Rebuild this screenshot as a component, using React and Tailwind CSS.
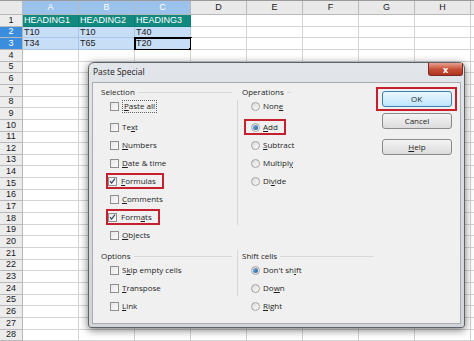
import React from 'react';

const cols = ['A', 'B', 'C', 'D', 'E', 'F', 'G', 'H', ''];

const cells = {
  1: ['HEADING1', 'HEADING2', 'HEADING3'],
  2: ['T10', 'T10', 'T40'],
  3: ['T34', 'T65', 'T20'],
};

const rows = Array.from({ length: 28 }, (_, i) => i + 1);

// alternate 12/11 px so the rows average out near 11.65px
const rowTall = (n) => Math.round(n * 11.65) - Math.round((n - 1) * 11.65) > 11;

const Mn = ({ text, at }) => (
  <span>
    {text.slice(0, at)}
    <span className="underline underline-offset-1">{text[at]}</span>
    {text.slice(at + 1)}
  </span>
);

const CheckBox = ({ checked }) => (
  <span className="flex h-[9px] w-[9px] shrink-0 items-center justify-center border border-[#8e8f8f] bg-gradient-to-br from-[#e6e6e6] to-[#fbfbfb]">
    {checked && (
      <svg width="8" height="8" viewBox="0 0 8 8">
        <path d="M1.2 4.2 L3 6.3 L6.8 1.2" fill="none" stroke="#2a3f5c" strokeWidth="1.3" />
      </svg>
    )}
  </span>
);

const Radio = ({ on }) => (
  <span className="flex h-[9px] w-[9px] shrink-0 items-center justify-center rounded-full border border-[#a3a3a3] bg-gradient-to-br from-[#dcdcdc] to-[#fafafa]">
    {on && <span className="h-[5px] w-[5px] rounded-full bg-gradient-to-br from-[#7fb4e4] to-[#1b5a99]" />}
  </span>
);

const Heading = ({ label, line = 'flex-1' }) => (
  <div className="flex h-[10px] items-center gap-[3px] text-[#1e1e1e]">
    <span className="leading-none">{label}</span>
    <span className={`h-px bg-[#d5d9dd] ${line}`} />
  </div>
);

const Option = ({ children, box, red, pad }) => (
  <div className={`flex h-[18px] items-center ${pad}`}>
    <span
      className={`flex items-center gap-[3px] ${
        red ? 'h-[16px] border-2 border-[#c6202f] pr-[6px]' : 'border-2 border-transparent'
      }`}
    >
      {box}
      {children}
    </span>
  </div>
);

function Sheet() {
  return (
    <div className="font-['Liberation_Sans',Arial,sans-serif] text-[9px] text-[#1a1a1a]">
      <div className="flex h-[15px] border-t border-[#9a9a9a] bg-[#e9e9e9]">
        <div className="w-[23px] shrink-0 border-r border-b border-[#b9b9b9]" />
        {cols.map((c, i) => (
          <div
            key={i}
            className={`flex w-[56px] shrink-0 items-center justify-center border-r border-b border-[#b9b9b9] ${
              i < 3 ? 'bg-[#9ac2ea] text-white' : ''
            }`}
          >
            {c}
          </div>
        ))}
      </div>
      {rows.map((r) => (
        <div key={r} className={`flex ${rowTall(r) ? 'h-[12px]' : 'h-[11px]'}`}>
          <div
            className={`flex w-[23px] shrink-0 items-center justify-center border-r border-b border-[#b9b9b9] ${
              r === 2 || r === 3 ? 'bg-[#3b8ddd] text-white' : 'bg-[#ececec]'
            }`}
          >
            {r}
          </div>
          {cols.map((c, i) => {
            const v = cells[r] && cells[r][i];
            const head = r === 1 && i < 3;
            const sel = (r === 2 || r === 3) && i < 3;
            const cur = r === 3 && i === 2;
            return (
              <div
                key={i}
                className={`relative flex w-[56px] shrink-0 items-center border-r border-b pl-px leading-none ${
                  head
                    ? 'border-[#0b7e74] bg-[#12897f] text-white'
                    : sel
                    ? 'border-[#a9c7e8] bg-[#c7def6]'
                    : 'border-[#d4d4d4] bg-white'
                } ${cur ? 'outline-2 -outline-offset-1 outline-black' : ''}`}
              >
                {v}
                {cur && <span className="absolute -right-[3px] -bottom-[3px] h-[4px] w-[4px] bg-black" />}
              </div>
            );
          })}
        </div>
      ))}
    </div>
  );
}

const Button = ({ children, primary }) => (
  <div
    className={`flex h-[16px] w-[70px] items-center justify-center rounded-[3px] border ${
      primary
        ? 'border-[#3c7fb1] bg-gradient-to-b from-[#eaf6fd] to-[#bee6fd]'
        : 'border-[#8a8a8a] bg-gradient-to-b from-[#f4f4f4] to-[#dcdcdc]'
    }`}
  >
    {children}
  </div>
);

function Dialog() {
  return (
    <div className="absolute top-[62px] left-[88px] flex h-[266px] w-[377px] flex-col rounded-t-[6px] rounded-b-[3px] border border-[#5f6368] bg-gradient-to-b from-[#e2e5e9] via-[#d8dbe0] to-[#d1d4d8] font-['Open_Sans',sans-serif] text-[8px] text-[#1e1e1e] shadow-[0_2px_8px_rgba(0,0,0,0.55)]">
      <div className="relative flex h-[19px] shrink-0 items-center pl-[4px] text-[8.5px] text-[#1a1a1a]">
        Paste Special
        <div className="absolute top-0 right-[1px] flex h-[13px] w-[35px] items-center justify-center rounded-b-[3px] border border-t-0 border-[#7a2a22] bg-gradient-to-b from-[#e8a190] via-[#c7503a] to-[#b2321e] text-[9px] leading-none font-bold text-white">
          x
        </div>
      </div>
      <div className="mx-[3px] mb-[3px] flex flex-1 border border-[#a9adb2] bg-[#f0f0f0]">
        <div className="flex w-[144px] shrink-0 flex-col pt-[4px]">
          <div className="pr-[5px] pl-[8px]">
            <Heading label="Selection" />
          </div>
          <div className="mb-[3px]">
            <Option pad="pl-[15px]" box={<CheckBox />}>
              <span className="border border-dotted border-[#666] px-px pb-[2px] leading-[9px]">
                <Mn text="Paste all" at={0} />
              </span>
            </Option>
          </div>
          <Option pad="pl-[15px]" box={<CheckBox />}><Mn text="Text" at={2} /></Option>
          <Option pad="pl-[15px]" box={<CheckBox />}><Mn text="Numbers" at={0} /></Option>
          <Option pad="pl-[15px]" box={<CheckBox />}><Mn text="Date & time" at={0} /></Option>
          <Option pad="pl-[13px]" red box={<CheckBox checked />}><span className="pl-px"><Mn text="Formulas" at={0} /></span></Option>
          <Option pad="pl-[15px]" box={<CheckBox />}><Mn text="Comments" at={0} /></Option>
          <Option pad="pl-[13px]" red box={<CheckBox checked />}><span className="pl-px"><Mn text="Formats" at={4} /></span></Option>
          <Option pad="pl-[15px]" box={<CheckBox />}><Mn text="Objects" at={0} /></Option>
          <div className="mt-[7px] pr-[5px] pl-[8px]">
            <Heading label="Options" />
          </div>
          <Option pad="pl-[15px]" box={<CheckBox />}><Mn text="Skip empty cells" at={1} /></Option>
          <Option pad="pl-[15px]" box={<CheckBox />}><Mn text="Transpose" at={0} /></Option>
          <Option pad="pl-[15px]" box={<CheckBox />}><Mn text="Link" at={0} /></Option>
        </div>

        <div className="flex w-px shrink-0 flex-col">
          <div className="mt-[17px] h-[125px] bg-[#d3d6da]" />
          <div className="mt-[25px] h-[46px] bg-[#d3d6da]" />
        </div>

        <div className="flex w-[138px] shrink-0 flex-col pt-[4px]">
          <div className="pl-[4px]">
            <Heading label="Operations" line="w-[4px]" />
          </div>
          <div className="mb-[3px]">
            <Option pad="pl-[11px]" box={<Radio />}><Mn text="None" at={3} /></Option>
          </div>
          <Option pad="pl-[6px]" red box={<span className="pl-[5px]"><Radio on /></span>}><Mn text="Add" at={0} /></Option>
          <Option pad="pl-[11px]" box={<Radio />}><Mn text="Subtract" at={0} /></Option>
          <Option pad="pl-[11px]" box={<Radio />}><Mn text="Multiply" at={7} /></Option>
          <Option pad="pl-[11px]" box={<Radio />}><Mn text="Divide" at={2} /></Option>
          <div className="h-[54px]" />
          <div className="mt-[7px] pr-[2px] pl-[4px]">
            <Heading label="Shift cells" />
          </div>
          <Option pad="pl-[11px]" box={<Radio on />}><Mn text="Don't shift" at={8} /></Option>
          <Option pad="pl-[11px]" box={<Radio />}><Mn text="Down" at={2} /></Option>
          <Option pad="pl-[11px]" box={<Radio />}><Mn text="Right" at={0} /></Option>
        </div>

        <div className="flex flex-col pt-[4px]">
          <div className="flex h-[24px] w-[81px] items-center justify-center border-2 border-[#c6202f]">
            <Button primary>OK</Button>
          </div>
          <div className="mt-[2px] pl-[6px]">
            <Button>Cancel</Button>
          </div>
          <div className="mt-[10px] pl-[6px]">
            <Button><Mn text="Help" at={0} /></Button>
          </div>
        </div>
      </div>
    </div>
  );
}

export default function App() {
  return (
    <div className="relative h-[341px] w-[474px] overflow-hidden bg-white">
      <Sheet />
      <Dialog />
    </div>
  );
}
